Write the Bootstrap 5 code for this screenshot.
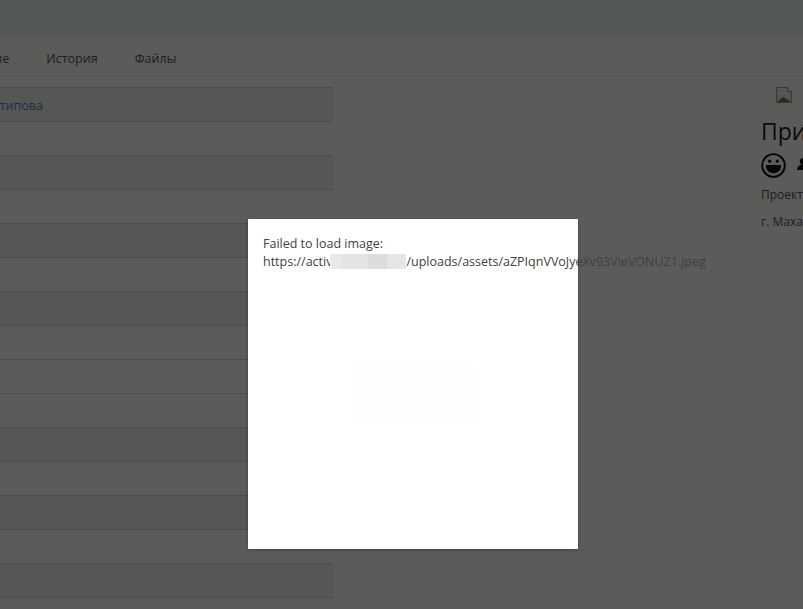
<!DOCTYPE html>
<html lang="ru"><head><meta charset="utf-8"><title>Просмотр</title>
<link rel="stylesheet" href="https://cdn.jsdelivr.net/npm/bootstrap@5.3.0/dist/css/bootstrap.min.css">
<style>
html,body{height:609px;overflow:hidden}
body{background:#fff;font-family:"Open Sans","Noto Sans",sans-serif;color:#333;position:relative}
.topstrip{height:36px;background:#e6f3f4}
.tabbar{height:41px;border-bottom:1px solid #f2f0ee;background:#fcfbf8;gap:37px;font-size:12.5px;line-height:45px;color:#555}
.tabfirst{margin-left:-52px}
.pagewrap{height:532px;background:#fbfbf8;padding-top:10px}
.rowlist{width:333px;border-top:1px solid #d6d6d2}
.stripe{height:34px;border-bottom:1px solid #d6d6d2;font-size:12.5px;line-height:36px;white-space:nowrap;overflow:hidden}
.stripe-dark{background:#eeeeec}
.stripe-link{color:#4a86c0;display:block;margin-left:-38px}
.sidecol{width:42px;position:absolute;left:761px;top:87px;overflow:hidden}
.sidepic{display:block;margin-left:15px;width:16px;height:16px}
.sidetitle{font-size:23px;line-height:30px;color:#222;margin-top:13px;white-space:nowrap}
.sideicons{margin-top:6px;height:26px;gap:11px}
.sideinfo{font-size:12px;color:#555;white-space:nowrap;line-height:16px}
.sideinfo-a{margin-top:9px}
.sideinfo-b{margin-top:11px}
.veil{position:absolute;inset:0;background:rgba(0,0,0,.64)}
.lightbox{position:absolute;left:248px;top:219px;width:330px;height:330px;background:#fff;box-shadow:0 1px 3px rgba(0,0,0,.3);padding:16px 15px}
.lightmsg{font-size:12.5px;line-height:18px;color:#3f3f3f;white-space:nowrap}
.blurout{display:inline-block;width:76px;height:15px;vertical-align:-3px;background:linear-gradient(90deg,#e9e9e9 0 15%,#e4e4e4 15% 50%,#dcdcdc 50% 75%,#e6e6e6 75%);margin-left:-2px}
.lightghost{position:absolute;left:103px;top:146px;width:124px;height:60px;background:#fefeff}
</style></head>
<body>
<div class="topstrip"></div>
<div class="tabbar d-flex">
  <span class="tabfirst">Описание</span>
  <span>История</span>
  <span>Файлы</span>
</div>
<div class="pagewrap">
  <div class="rowlist">
    <div class="stripe stripe-dark"><span class="stripe-link">Прототипова</span></div>
    <div class="stripe"></div>
    <div class="stripe stripe-dark"></div>
    <div class="stripe"></div>
    <div class="stripe stripe-dark"></div>
    <div class="stripe"></div>
    <div class="stripe stripe-dark"></div>
    <div class="stripe"></div>
    <div class="stripe"></div>
    <div class="stripe"></div>
    <div class="stripe stripe-dark"></div>
    <div class="stripe"></div>
    <div class="stripe stripe-dark"></div>
    <div class="stripe"></div>
    <div class="stripe stripe-dark"></div>
  </div>
</div>
<div class="sidecol">
  <svg class="sidepic" viewBox="0 0 16 16"><path d="M.5.5h11l4 4v11H.5z" fill="#e4e8ea" stroke="#999"/><path d="M11.500.5v4h4" fill="#fff" stroke="#999"/><path d="M1 15l6-5 5 3 3 2z" fill="#4f8f34"/><path d="M2 7c2-3 7-3 9 0z" fill="#fff"/></svg>
  <div class="sidetitle">Приём</div>
  <div class="sideicons d-flex align-items-center">
    <svg width="25" height="25" viewBox="0 0 26 26" class="flex-shrink-0"><circle cx="13" cy="13" r="11.8" fill="#fff" stroke="#111" stroke-width="2"/><circle cx="9" cy="8.500" r="1.700" fill="#111"/><circle cx="17" cy="8.500" r="1.700" fill="#111"/><path d="M5 12.500h16c0 5.500-3.500 8.500-8 8.500s-8-3-8-8.500z" fill="#111"/></svg>
    <svg width="12" height="14" viewBox="0 0 12 14" class="flex-shrink-0"><circle cx="6" cy="3.500" r="3.200" fill="#111"/><path d="M0 12c0-4 3-5.500 6-5.500s6 1.500 6 5.500z" fill="#111"/></svg>
  </div>
  <div class="sideinfo sideinfo-a">Проект</div>
  <div class="sideinfo sideinfo-b">г. Махачкала</div>
</div>
<div class="veil"></div>
<div class="lightbox">
  <div class="lightmsg">Failed to load image:<br>https://activ<span class="blurout"></span>/uploads/assets/aZPIqnVVoJyeXv93VieVONUZ1.jpeg</div>
  <div class="lightghost"></div>
</div>
<script src="https://cdn.jsdelivr.net/npm/bootstrap@5.3.0/dist/js/bootstrap.bundle.min.js"></script>
</body></html>
